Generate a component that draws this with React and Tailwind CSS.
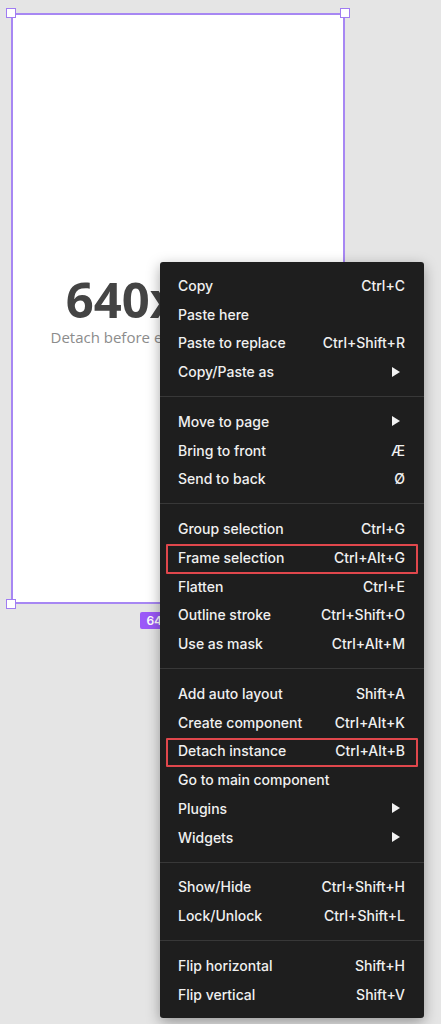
import React from 'react';

const sections = [
  [
    { label: 'Copy', shortcut: 'Ctrl+C' },
    { label: 'Paste here' },
    { label: 'Paste to replace', shortcut: 'Ctrl+Shift+R' },
    { label: 'Copy/Paste as', submenu: true },
  ],
  [
    { label: 'Move to page', submenu: true },
    { label: 'Bring to front', shortcut: 'Æ' },
    { label: 'Send to back', shortcut: 'Ø' },
  ],
  [
    { label: 'Group selection', shortcut: 'Ctrl+G' },
    { label: 'Frame selection', shortcut: 'Ctrl+Alt+G', marked: true },
    { label: 'Flatten', shortcut: 'Ctrl+E' },
    { label: 'Outline stroke', shortcut: 'Ctrl+Shift+O' },
    { label: 'Use as mask', shortcut: 'Ctrl+Alt+M' },
  ],
  [
    { label: 'Add auto layout', shortcut: 'Shift+A' },
    { label: 'Create component', shortcut: 'Ctrl+Alt+K' },
    { label: 'Detach instance', shortcut: 'Ctrl+Alt+B', marked: true },
    { label: 'Go to main component' },
    { label: 'Plugins', submenu: true },
    { label: 'Widgets', submenu: true },
  ],
  [
    { label: 'Show/Hide', shortcut: 'Ctrl+Shift+H' },
    { label: 'Lock/Unlock', shortcut: 'Ctrl+Shift+L' },
  ],
  [
    { label: 'Flip horizontal', shortcut: 'Shift+H' },
    { label: 'Flip vertical', shortcut: 'Shift+V' },
  ],
];

const Handle = ({ className }) => (
  <div className={`absolute w-[10px] h-[10px] bg-white border-[1.5px] border-[#a07cf2] ${className}`} />
);

const MenuItem = ({ item }) => (
  <div className="relative flex items-center justify-between h-[28.75px] pl-[18px] pr-[19px]">
    {item.marked && (
      <div className="absolute left-[6px] right-[6px] top-[1px] bottom-[-2px] border-2 border-[#e0474c] rounded-[1px]" />
    )}
    <span>{item.label}</span>
    {item.shortcut && <span>{item.shortcut}</span>}
    {item.submenu && (
      <svg width="8" height="10" viewBox="0 0 8 10" className="mr-[5px]">
        <path d="M0 0 L8 5 L0 10 Z" fill="#f2f2f2" />
      </svg>
    )}
  </div>
);

const App = () => {
  return (
    <div className="relative h-[1024px] w-full overflow-hidden bg-[#e5e5e5]">
      {/* frame on canvas */}
      <div className="relative ml-[11px] pt-[13px] w-[334px]">
        <div className="relative h-[591px] bg-white border-2 border-[#a787f3] flex flex-col items-center pt-[257px]">
          <div className="text-[49px] leading-[55px] font-bold text-[#444444] font-['Open_Sans',sans-serif] whitespace-nowrap">
            640x1136
          </div>
          <div className="text-[15px] leading-[20px] text-[#8c8c8c] font-['Open_Sans',sans-serif] whitespace-nowrap">
            Detach before editing this instance...
          </div>
          <Handle className="left-[-7px] top-[-7px]" />
          <Handle className="right-[-7px] top-[-7px]" />
          <Handle className="left-[-7px] bottom-[-7px]" />
          <Handle className="right-[-7px] bottom-[-7px]" />
        </div>
        <div className="flex justify-center mt-[8px]">
          <span className="px-[6px] h-[17px] leading-[17px] rounded-[2px] bg-[#9b59f8] text-white text-[12px] font-semibold font-['Inter',sans-serif]">
            640 × 1136
          </span>
        </div>
      </div>

      {/* context menu */}
      <div className="absolute left-[160px] top-[262px] w-[264px] py-[9px] bg-[#1e1e1e] rounded-[3px] shadow-[0_4px_14px_rgba(0,0,0,0.35)] text-[#f0f0f0] text-[14px] font-medium font-['Inter',sans-serif]">
        {sections.map((section, i) => (
          <div key={i}>
            {i > 0 && <div className="h-px bg-[#383838] my-[10px]" />}
            {section.map((item) => (
              <MenuItem key={item.label} item={item} />
            ))}
          </div>
        ))}
      </div>
    </div>
  );
};

export default App;
